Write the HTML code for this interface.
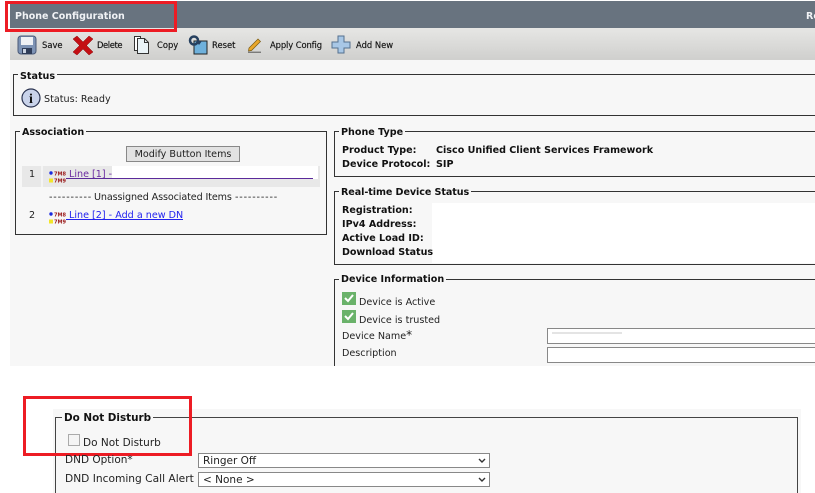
<!DOCTYPE html>
<html><head><meta charset="utf-8">
<style>
html,body{margin:0;padding:0;width:815px;height:493px;overflow:hidden;background:#fff}
body{position:relative;font-family:"DejaVu Sans","Liberation Sans",sans-serif;font-size:9.6px;color:#222}
#w{position:absolute;left:0;top:0;width:815px;height:493px;filter:blur(.35px)}
.a{position:absolute}
.t{position:absolute;white-space:nowrap;line-height:12px;margin-top:1px}
.tb{font-size:8.4px;color:#111;-webkit-text-stroke:.15px #111}
.b{font-weight:bold;color:#111;font-size:9.58px}
.fs{position:absolute;border:1px solid #333;box-sizing:border-box}
.lg{position:absolute;background:#f7f7f7;padding:0 2px;font-weight:bold;white-space:nowrap;line-height:12px;color:#111;font-size:9.6px;margin-top:1px}
.inp{position:absolute;background:#fff;border:1px solid #888;box-sizing:border-box}
.d{font-size:10.5px}
</style></head>
<body><div id="w">
<div class="a" style="left:10px;top:60px;width:805px;height:306px;background:#f7f7f7"></div>
<div class="a" style="left:10px;top:1px;width:805px;height:27px;background:#68737f"></div>
<div class="a" style="left:10px;top:28px;width:805px;height:32px;background:linear-gradient(#e6e6e4,#cfcfcd)"></div>
<div class="t" style="left:15px;top:10px;color:#f0f2f5;font-weight:bold;font-size:9.5px">Phone Configuration</div>
<div class="t" style="left:806px;top:10px;color:#f0f2f5;font-weight:bold;font-size:9.5px">Re</div>
<div class="a" style="left:5px;top:1px;width:172px;height:31px;border:3px solid #ed1c24;box-sizing:border-box"></div>

<!-- toolbar icons -->
<svg class="a" style="left:17px;top:35px" width="20" height="20" viewBox="0 0 20 20"><rect x="1" y="1" width="18" height="18" rx="3" fill="#7d93b5" stroke="#4a5a78"/><rect x="4" y="2" width="12" height="8" fill="#eef1f5"/><rect x="5" y="13" width="10" height="6" fill="#2e3c58"/><rect x="6" y="14" width="3" height="4" fill="#c9d2e0"/></svg>
<svg class="a" style="left:72px;top:35px" width="22" height="21" viewBox="0 0 22 21"><path d="M1 4L5 1l6 6 6-6 4 3-6.500 6.500L21 17l-4 3-6-6-6 6-4-3 6.500-6.500z" fill="#c40f14" stroke="#8a0a0d" stroke-width=".5"/></svg>
<svg class="a" style="left:133px;top:35px" width="18" height="20" viewBox="0 0 18 20"><path d="M1.500 1.500h6v14h-6z" fill="#fff" stroke="#333"/><path d="M4.500 3.500h7l4 4v11h-11z" fill="#eaf3f7" stroke="#333"/><path d="M11.500 3.500v4h4" fill="none" stroke="#333"/></svg>
<svg class="a" style="left:187px;top:35px" width="22" height="20" viewBox="0 0 22 20"><rect x="7" y="6" width="13" height="13" fill="#6fb1dc" stroke="#222"/><circle cx="7" cy="5.500" r="4" fill="none" stroke="#26405f" stroke-width="2.500"/><path d="M9 6l6 0-3 4z" fill="#26405f"/></svg>
<svg class="a" style="left:247px;top:37px" width="16" height="16" viewBox="0 0 16 16"><path d="M2 11L11 2l2.500 2.500-9 9-3 .5z" fill="#e9a72b" stroke="#7a5a10" stroke-width=".7"/><path d="M1 15.200h13" stroke="#555" stroke-width="1"/></svg>
<svg class="a" style="left:331px;top:35px" width="20" height="19" viewBox="0 0 20 19"><path d="M7 1h6v6h6v6h-6v5H7v-5H1V7h6z" fill="#a8c7e6" stroke="#55708f"/></svg>
<div class="t tb" style="left:42px;top:38px">Save</div>
<div class="t tb" style="left:97px;top:38px;letter-spacing:-.4px">Delete</div>
<div class="t tb" style="left:157px;top:38px">Copy</div>
<div class="t tb" style="left:212px;top:38px">Reset</div>
<div class="t tb" style="left:270px;top:38px;letter-spacing:-.1px">Apply Config</div>
<div class="t tb" style="left:356px;top:38px">Add New</div>

<!-- Status -->
<div class="fs" style="left:13px;top:74px;width:803px;height:42px;border-right:0"></div>
<div class="lg" style="left:18px;top:70px">Status</div>
<svg class="a" style="left:21px;top:88px" width="20" height="20" viewBox="0 0 20 20"><circle cx="10" cy="10" r="9" fill="#c9d3ea" stroke="#2a3350" stroke-width="1.200"/><text x="10" y="15" text-anchor="middle" font-family="Liberation Serif,serif" font-weight="bold" font-size="14" fill="#111">i</text></svg>
<div class="t" style="left:44px;top:93px">Status: Ready</div>

<!-- Association -->
<div class="fs" style="left:15px;top:131px;width:312px;height:104px"></div>
<div class="lg" style="left:20px;top:126px">Association</div>
<div class="a" style="left:126px;top:146px;width:114px;height:16px;box-sizing:border-box;background:#e2e2e2;border:1px solid #888;text-align:center;line-height:15px;color:#222">Modify Button Items</div>
<div class="a" style="left:22px;top:166px;width:298px;height:21px;background:#e8e8e8"></div>
<div class="a" style="left:41px;top:166px;width:2px;height:21px;background:#f4f4f4"></div>
<div class="a" style="left:112px;top:166px;width:206px;height:13px;background:#fff"></div>
<div class="t" style="left:29px;top:168px">1</div>
<div class="t" style="left:69px;top:168px;color:#6a2ba0">Line [1] -</div>
<div class="a" style="left:66px;top:178px;width:247px;height:1px;background:#5b2a9a"></div>
<div class="t" style="left:49px;top:191px;letter-spacing:.85px">----------</div>
<div class="t" style="left:94px;top:191px;letter-spacing:-.11px">Unassigned Associated Items</div>
<div class="t" style="left:235px;top:191px;letter-spacing:.85px">----------</div>
<div class="t" style="left:29px;top:209px">2</div>
<div class="t" style="left:69px;top:209px;color:#2222ee">Line [2] - Add a new DN</div>
<div class="a" style="left:66px;top:219px;width:117px;height:1px;background:#2222ee"></div>
<svg class="a" style="left:49px;top:170px" width="18" height="14" viewBox="0 0 18 14"><circle cx="2" cy="3" r="1.700" fill="#1a2be0"/><rect x="0" y="8.500" width="4" height="4" fill="#f2e52a"/><text x="5" y="5.500" font-size="5.500" textLength="12" lengthAdjust="spacingAndGlyphs" font-weight="bold" font-family="DejaVu Sans" fill="#9a1a1a">7M8</text><text x="5" y="12.500" font-size="5.500" textLength="12" lengthAdjust="spacingAndGlyphs" font-weight="bold" font-family="DejaVu Sans" fill="#9a1a1a">7M9</text></svg>
<svg class="a" style="left:49px;top:211px" width="18" height="14" viewBox="0 0 18 14"><circle cx="2" cy="3" r="1.700" fill="#1a2be0"/><rect x="0" y="8.500" width="4" height="4" fill="#f2e52a"/><text x="5" y="5.500" font-size="5.500" textLength="12" lengthAdjust="spacingAndGlyphs" font-weight="bold" font-family="DejaVu Sans" fill="#9a1a1a">7M8</text><text x="5" y="12.500" font-size="5.500" textLength="12" lengthAdjust="spacingAndGlyphs" font-weight="bold" font-family="DejaVu Sans" fill="#9a1a1a">7M9</text></svg>

<!-- Phone Type -->
<div class="fs" style="left:334px;top:131px;width:482px;height:46px;border-right:0"></div>
<div class="lg" style="left:339px;top:126px">Phone Type</div>
<div class="t b" style="left:342px;top:144px">Product Type:</div>
<div class="t b" style="left:436px;top:144px">Cisco Unified Client Services Framework</div>
<div class="t b" style="left:342px;top:158px">Device Protocol:</div>
<div class="t b" style="left:436px;top:158px">SIP</div>

<!-- Real-time -->
<div class="fs" style="left:334px;top:191px;width:482px;height:74px;border-right:0"></div>
<div class="a" style="left:432px;top:203px;width:383px;height:60px;background:#fff"></div>
<div class="lg" style="left:339px;top:186px;letter-spacing:-.08px">Real-time Device Status</div>
<div class="t b" style="left:342px;top:204px">Registration:</div>
<div class="t b" style="left:342px;top:218px">IPv4 Address:</div>
<div class="t b" style="left:342px;top:232px">Active Load ID:</div>
<div class="t b" style="left:342px;top:246px;letter-spacing:-.05px">Download Status</div>

<!-- Device Information -->
<div class="a" style="left:334px;top:279px;width:481px;height:1px;background:#333"></div>
<div class="a" style="left:334px;top:279px;width:1px;height:87px;background:#333"></div>
<div class="lg" style="left:339px;top:273px">Device Information</div>
<svg class="a" style="left:342px;top:292px" width="14" height="13" viewBox="0 0 14 13"><rect width="14" height="13" fill="#6ab26a"/><path d="M3 6l3 3 5-6" fill="none" stroke="#fff" stroke-width="2"/></svg>
<div class="t" style="left:359px;top:296px">Device is Active</div>
<svg class="a" style="left:342px;top:310px" width="14" height="13" viewBox="0 0 14 13"><rect width="14" height="13" fill="#6ab26a"/><path d="M3 6l3 3 5-6" fill="none" stroke="#fff" stroke-width="2"/></svg>
<div class="t" style="left:359px;top:314px">Device is trusted</div>
<div class="t" style="left:342px;top:328px">Device Name<span style="font-size:12px">*</span></div>
<div class="t" style="left:342px;top:347px">Description</div>
<div class="inp" style="left:547px;top:328px;width:269px;height:16px"></div>
<div class="a" style="left:552px;top:332px;width:70px;height:2px;background:#e4e4e4"></div>
<div class="inp" style="left:547px;top:347px;width:269px;height:16px"></div>

<!-- DND -->
<div class="a" style="left:53px;top:409px;width:748px;height:84px;background:#f7f7f7"></div>
<div class="a" style="left:55px;top:417px;width:743px;height:76px;border:1px solid #444;border-bottom:0;box-sizing:border-box"></div>
<div class="lg" style="left:62px;top:411px;font-size:10.400px">Do Not Disturb</div>
<div class="a" style="left:68px;top:434px;width:12px;height:12px;border:1px solid #aaa;box-sizing:border-box;background:#f4f4f4"></div>
<div class="t d" style="left:83px;top:436px">Do Not Disturb</div>
<div class="a" style="left:23px;top:396px;width:169px;height:60px;border:3px solid #ed1c24;box-sizing:border-box"></div>
<div class="t d" style="left:65px;top:453px">DND Option*</div>
<div class="t d" style="left:65px;top:472px;font-size:10.650px">DND Incoming Call Alert</div>
<div class="inp d" style="left:198px;top:453px;width:292px;height:15px;padding-left:4px;line-height:15px">Ringer Off</div>
<div class="inp d" style="left:198px;top:472px;width:292px;height:15px;padding-left:4px;line-height:15px">&lt; None &gt;</div>
<svg class="a" style="left:478px;top:458px" width="8" height="6" viewBox="0 0 8 6"><path d="M1 1l3 3 3-3" fill="none" stroke="#333" stroke-width="1.400"/></svg>
<svg class="a" style="left:478px;top:477px" width="8" height="6" viewBox="0 0 8 6"><path d="M1 1l3 3 3-3" fill="none" stroke="#333" stroke-width="1.400"/></svg>
</div></body></html>
